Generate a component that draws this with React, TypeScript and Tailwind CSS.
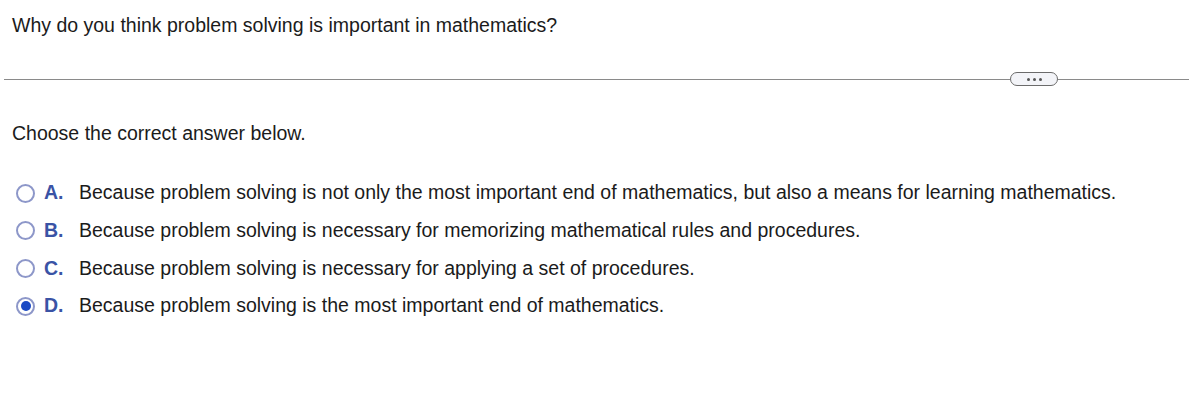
import React from 'react';

const options = [
  { key: 'A', text: 'Because problem solving is not only the most important end of mathematics, but also a means for learning mathematics.' },
  { key: 'B', text: 'Because problem solving is necessary for memorizing mathematical rules and procedures.' },
  { key: 'C', text: 'Because problem solving is necessary for applying a set of procedures.' },
  { key: 'D', text: 'Because problem solving is the most important end of mathematics.', selected: true },
];

const Radio: React.FC<{ checked?: boolean }> = ({ checked }) => (
  <span className="w-[19px] h-[19px] rounded-full border-2 border-[#8d97c9] bg-white flex items-center justify-center shrink-0">
    {checked && <span className="w-[10px] h-[10px] rounded-full bg-[#1a49c4]" />}
  </span>
);

export default function App() {
  return (
    <div className="bg-white w-[1189px] h-[400px] text-[#1b1b1b] font-['Liberation_Sans',Arial,sans-serif]">
      <div className="pl-3 pt-[13px] text-[19.5px] leading-[24px]">Why do you think problem solving is important in mathematics?</div>
      <div className="mt-[35px] flex items-center pl-1">
        <div className="w-[1006px] h-px bg-[#8a8a8a]" />
        <button className="w-[48px] h-[14px] rounded-full border border-[#6b6b6b] bg-[#f3f4f8] flex items-center justify-center gap-[3px]">
          <span className="w-[3px] h-[3px] rounded-full bg-[#555]" />
          <span className="w-[3px] h-[3px] rounded-full bg-[#555]" />
          <span className="w-[3px] h-[3px] rounded-full bg-[#555]" />
        </button>
        <div className="flex-1 h-px bg-[#8a8a8a]" />
      </div>
      <div className="pl-3 mt-[35px] text-[19.5px] leading-[24px]">Choose the correct answer below.</div>
      <div className="mt-[36px] flex flex-col gap-[13.7px] pl-4">
        {options.map((o) => (
          <div key={o.key} className="flex items-center h-[24px] text-[19.5px]">
            <Radio checked={o.selected} />
            <span className="ml-[9px] w-[35px] font-bold text-[#3a53a5]">{o.key}.</span>
            <span>{o.text}</span>
          </div>
        ))}
      </div>
    </div>
  );
}
